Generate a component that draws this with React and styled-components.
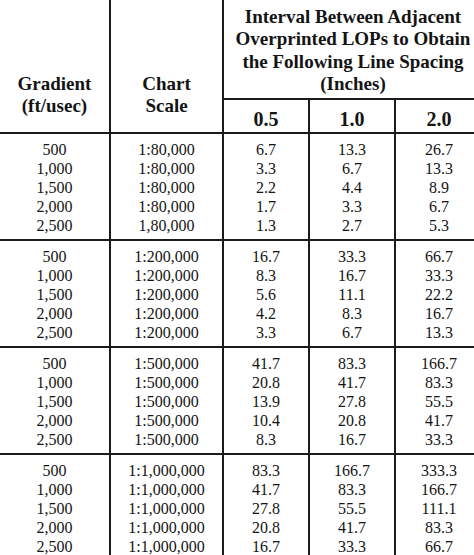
import React from "react";
import styled, { createGlobalStyle } from "styled-components";

const GlobalStyle = createGlobalStyle`
  html, body {
    margin: 0;
    padding: 0;
    background: #ffffff;
    overflow: hidden;
  }
  body {
    width: 474px;
    height: 555px;
    font-family: "Liberation Serif", "Times New Roman", serif;
    color: #141414;
  }
`;

const COLS = "111px 113px 86px 86px 86px";
const LINE = "#1b1b1b";

const Page = styled.div`
  width: 482px;
`;

const HeaderGrid = styled.div`
  display: grid;
  grid-template-columns: ${COLS};
  grid-template-rows: 100px 34px;
`;

const SideHead = styled.div`
  grid-row: 1 / span 2;
  box-sizing: border-box;
  border-right: 2px solid ${LINE};
  border-bottom: 2px solid ${LINE};
  display: flex;
  flex-direction: column;
  justify-content: flex-end;
  align-items: center;
  padding-bottom: 15px;
  font-weight: 700;
  font-size: 19px;
  line-height: 22px;
  text-align: center;
`;

const IntervalHead = styled.div`
  grid-column: 3 / span 3;
  box-sizing: border-box;
  border-bottom: 2px solid ${LINE};
  padding-top: 6px;
  font-weight: 700;
  font-size: 19px;
  line-height: 22.3px;
  text-align: center;
`;

const SubHead = styled.div`
  box-sizing: border-box;
  border-right: ${(p) => (p.$last ? "none" : `2px solid ${LINE}`)};
  border-bottom: 2px solid ${LINE};
  padding-top: 5px;
  font-weight: 700;
  font-size: 20px;
  line-height: 28px;
  text-align: center;
`;

const Group = styled.div`
  display: grid;
  grid-template-columns: ${COLS};
  height: 107px;
  box-sizing: border-box;
  border-bottom: 2px solid ${LINE};
`;

const Cell = styled.div`
  box-sizing: border-box;
  border-right: ${(p) => (p.$last ? "none" : `2px solid ${LINE}`)};
  padding-top: 6px;
  display: flex;
  flex-direction: column;
  align-items: center;
`;

const Value = styled.span`
  display: block;
  font-size: 16px;
  line-height: 19px;
  white-space: nowrap;
`;

const gradients = ["500", "1,000", "1,500", "2,000", "2,500"];

const groups = [
  {
    scale: ["1:80,000", "1:80,000", "1:80,000", "1:80,000", "1,80,000"],
    cols: [
      ["6.7", "3.3", "2.2", "1.7", "1.3"],
      ["13.3", "6.7", "4.4", "3.3", "2.7"],
      ["26.7", "13.3", "8.9", "6.7", "5.3"],
    ],
  },
  {
    scale: Array(5).fill("1:200,000"),
    cols: [
      ["16.7", "8.3", "5.6", "4.2", "3.3"],
      ["33.3", "16.7", "11.1", "8.3", "6.7"],
      ["66.7", "33.3", "22.2", "16.7", "13.3"],
    ],
  },
  {
    scale: Array(5).fill("1:500,000"),
    cols: [
      ["41.7", "20.8", "13.9", "10.4", "8.3"],
      ["83.3", "41.7", "27.8", "20.8", "16.7"],
      ["166.7", "83.3", "55.5", "41.7", "33.3"],
    ],
  },
  {
    scale: Array(5).fill("1:1,000,000"),
    cols: [
      ["83.3", "41.7", "27.8", "20.8", "16.7"],
      ["166.7", "83.3", "55.5", "41.7", "33.3"],
      ["333.3", "166.7", "111.1", "83.3", "66.7"],
    ],
  },
];

const Column = ({ values, last }) => (
  <Cell $last={last}>
    {values.map((v, i) => (
      <Value key={i}>{v}</Value>
    ))}
  </Cell>
);

export default function App() {
  return (
    <>
      <GlobalStyle />
      <Page>
        <HeaderGrid>
          <SideHead>
            <span>Gradient</span>
            <span>(ft/usec)</span>
          </SideHead>
          <SideHead>
            <span>Chart</span>
            <span>Scale</span>
          </SideHead>
          <IntervalHead>
            Interval Between Adjacent
            <br />
            Overprinted LOPs to Obtain
            <br />
            the Following Line Spacing
            <br />
            (Inches)
          </IntervalHead>
          <SubHead>0.5</SubHead>
          <SubHead>1.0</SubHead>
          <SubHead $last>2.0</SubHead>
        </HeaderGrid>
        {groups.map((g, gi) => (
          <Group key={gi}>
            <Column values={gradients} />
            <Column values={g.scale} />
            <Column values={g.cols[0]} />
            <Column values={g.cols[1]} />
            <Column values={g.cols[2]} last />
          </Group>
        ))}
      </Page>
    </>
  );
}
